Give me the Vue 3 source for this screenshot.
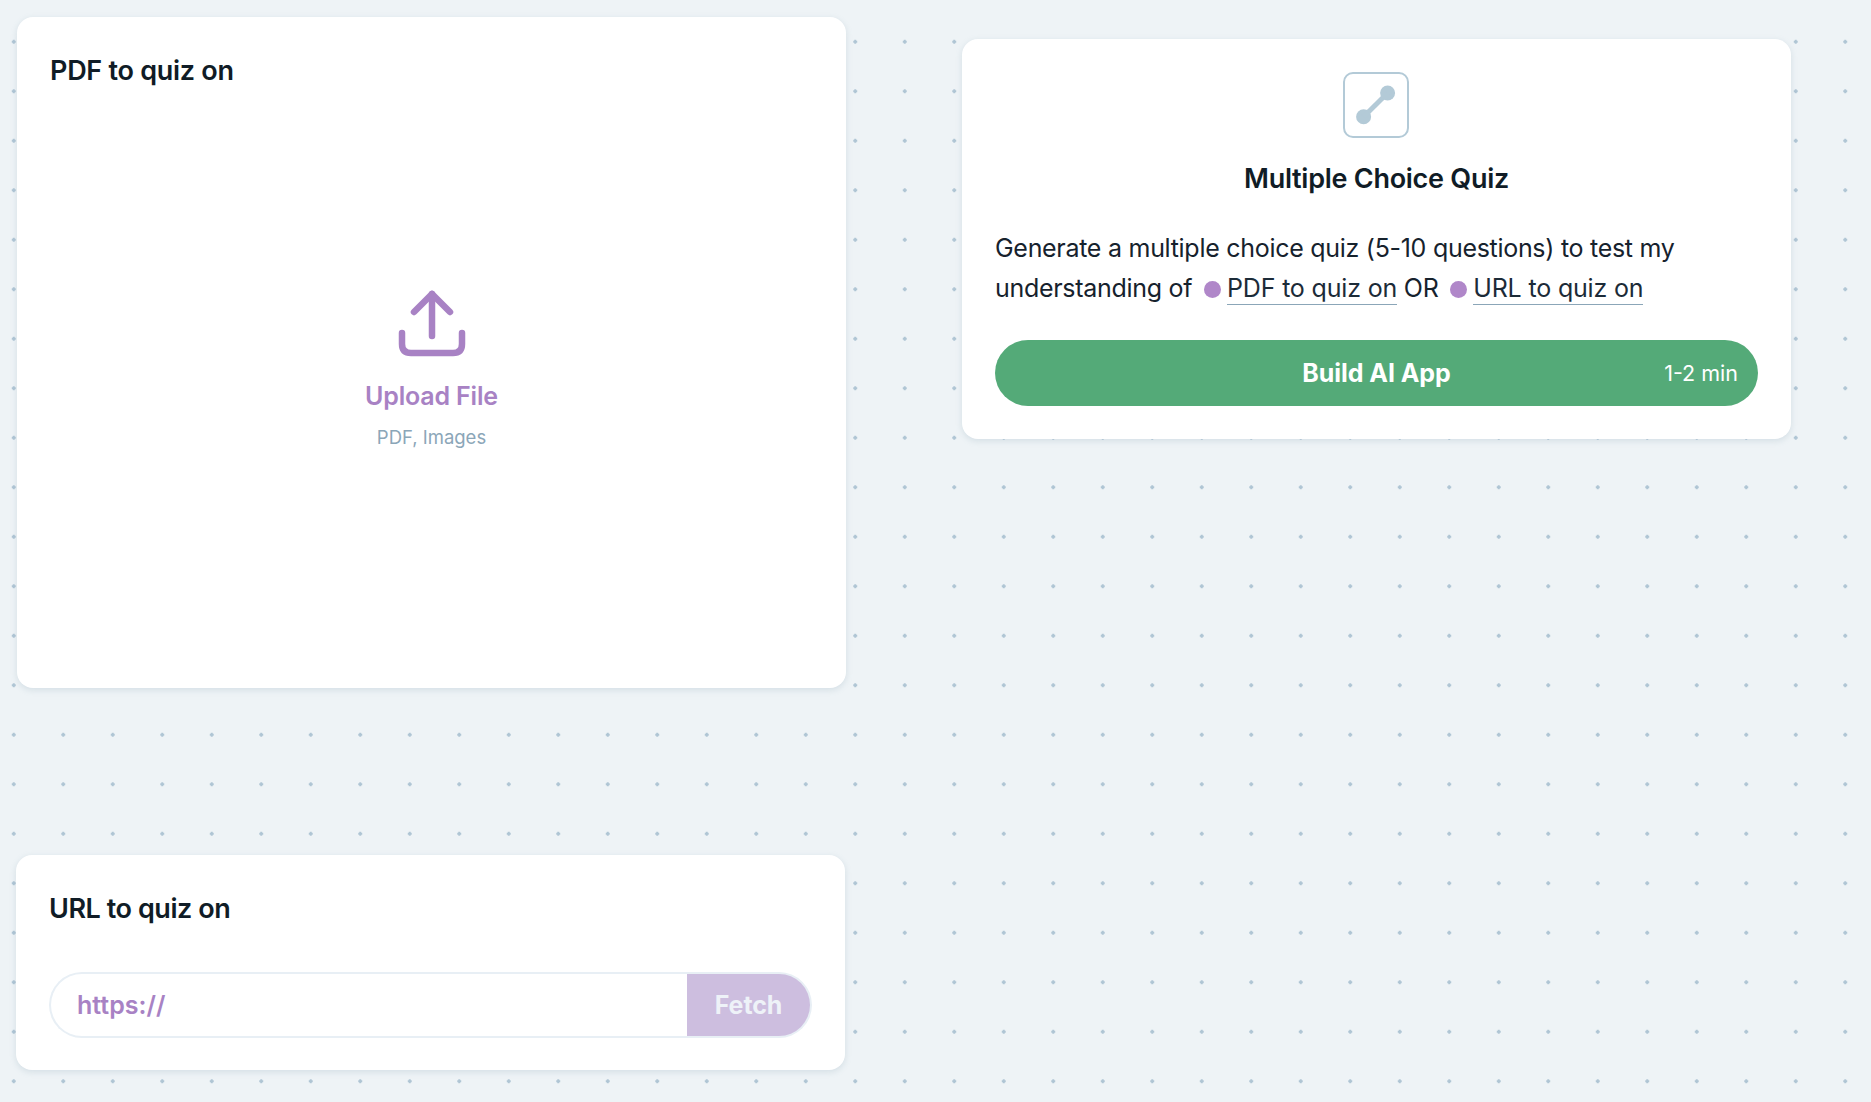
<script setup>
const title = 'Multiple Choice Quiz'
</script>

<template>
  <main class="canvas">
    <section class="left">
      <div class="card pdf">
        <h2 class="label">PDF to quiz on</h2>
        <div class="upload">
          <svg class="up-icon" width="68" height="70" viewBox="0 0 68 70" fill="none" stroke="#a882c4" stroke-width="6.5" stroke-linecap="round" stroke-linejoin="round">
            <path d="M16 22 L34 4 L52 22" />
            <path d="M34 4 V46" />
            <path d="M4 43 V54 Q4 63 13 63 H55 Q64 63 64 54 V43" />
          </svg>
          <div class="up-title">Upload File</div>
          <div class="up-sub">PDF, Images</div>
        </div>
      </div>
      <div class="card url">
        <h2 class="label url-label">URL to quiz on</h2>
        <div class="field">
          <div class="input">https://</div>
          <button class="fetch">Fetch</button>
        </div>
      </div>
    </section>
    <section class="card quiz">
      <div class="glyph">
        <svg width="62" height="62" viewBox="0 0 62 62" fill="#b3cad7" stroke="none">
          <circle cx="42.6" cy="19" r="7.5" />
          <circle cx="18.6" cy="42.7" r="7.5" />
          <path d="M42.6 19 L18.6 42.7" stroke="#b3cad7" stroke-width="5" />
        </svg>
      </div>
      <h1 class="quiz-title">{{ title }}</h1>
      <p class="desc">Generate a multiple choice quiz (5-10 questions) to test my understanding of <span class="ref"><i class="dot"></i><span class="link">PDF to quiz on</span></span> OR <span class="ref"><i class="dot"></i><span class="link">URL to quiz on</span></span></p>
      <button class="build"><span>Build AI App</span><small>1-2 min</small></button>
    </section>
  </main>
</template>

<style scoped>
.canvas {
  box-sizing: border-box;
  width: 1871px;
  height: 1102px;
  overflow: hidden;
  display: flex;
  align-items: flex-start;
  gap: 116px;
  padding: 17px 0 0 17px;
  background-color: #eef3f6;
  background-image: radial-gradient(circle at center, #afc5d4 1.8px, transparent 1.9px);
  background-size: 49.5px 49.5px;
  background-position: -11px 17px;
  font-family: Inter, "Liberation Sans", sans-serif;
  color: #101c26;
}
.left { width: 829px; display: flex; flex-direction: column; gap: 167px; }
.card {
  box-sizing: border-box;
  background: #fff;
  border-radius: 16px;
  box-shadow: 0 2px 6px rgba(120, 150, 170, .22);
}
.pdf { height: 671px; padding: 36px 33px; display: flex; flex-direction: column; }
.label { margin: 0; font-size: 27px; line-height: 36px; font-weight: 600; letter-spacing: -.28px; }
.url-label { letter-spacing: -.45px; }
.upload { margin-top: 201px; display: flex; flex-direction: column; align-items: center; }
.up-title { margin-top: 19px; font-size: 25px; line-height: 34px; font-weight: 600; color: #a882c4; letter-spacing: -.17px; }
.up-sub { margin-top: 11px; font-size: 18.5px; line-height: 26px; color: #8ba6b8; }
.url { width: 829px; height: 215px; margin-left: -1px; padding: 36px 33px 0; }
.field { display: flex; height: 66px; margin-top: 45px; }
.input {
  flex: 1;
  box-sizing: border-box;
  border: 2px solid #e8eff5;
  border-right: 0;
  border-radius: 33px 0 0 33px;
  padding-left: 26px;
  font-size: 25px;
  line-height: 62px;
  font-weight: 600;
  color: #a882c4;
}
.fetch {
  width: 125px;
  border: 2px solid #e8eff5;
  border-left: 0;
  border-radius: 0 33px 33px 0;
  background: #cdbedf;
  color: #eef2f8;
  font: 700 25px Inter, "Liberation Sans", sans-serif;
  letter-spacing: -.1px;
  padding: 0;
}
.quiz { width: 829px; height: 400px; margin-top: 22px; padding: 33px; display: flex; flex-direction: column; align-items: stretch; }
.glyph {
  box-sizing: border-box;
  width: 66px;
  height: 66px;
  margin: 0 auto;
  border: 2px solid #b3cad7;
  border-radius: 10px;
  transform: translateX(-1px);
}
.glyph svg { display: block; }
.quiz-title { margin: 23px 0 0; text-align: center; font-size: 27px; line-height: 36px; font-weight: 600; letter-spacing: -.27px; }
.desc { margin: 31px 0 0; font-size: 25px; line-height: 40px; color: #16222d; letter-spacing: -.3px; word-spacing: .1px; }
.ref { white-space: nowrap; }
.dot { display: inline-block; width: 17px; height: 17px; margin: 0 6px 0 5px; border-radius: 50%; background: #b087c9; vertical-align: -1px; }
.link { border-bottom: 1.5px solid #8ba6b8; color: #1c2b38; padding-bottom: 1px; letter-spacing: -.2px; }
.build {
  position: relative;
  height: 66px;
  margin-top: 32px;
  border: 0;
  border-radius: 33px;
  background: #54aa78;
  color: #fff;
  font: 700 25px Inter, "Liberation Sans", sans-serif;
  letter-spacing: -.05px;
  padding: 0;
}
.build small { position: absolute; right: 20px; top: 20px; font-size: 21.5px; font-weight: 400; letter-spacing: 0; }
</style>
